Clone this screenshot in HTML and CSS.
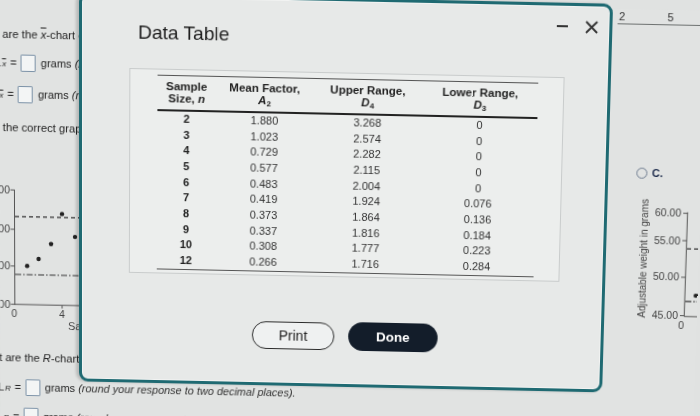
FILE: index.html
```html
<!DOCTYPE html>
<html lang="en">
<head>
<meta charset="utf-8">
<title>Data Table</title>
<link rel="stylesheet" href="styles.css">
</head>
<body>
<div class="photo">
  <div class="page">
    <div class="question">
      <p class="q q1">What are the <span class="xbar">x</span>-chart control limits?</p>
      <div class="ans ans-1"><span class="lbl">UCL<sub class="sub"><span class="xbar">x</span></sub></span><span>=</span><span class="box"></span><span class="unit">grams <span class="hint">(round your response to two decimal places).</span></span></div>
      <div class="ans ans-2"><span class="lbl">LCL<sub class="sub"><span class="xbar">x</span></sub></span><span>=</span><span class="box"></span><span class="unit">grams <span class="hint">(round your response to two decimal places).</span></span></div>
      <p class="q q2">Choose the correct graph below.</p>
      <svg class="chart-l" width="100" height="157" viewBox="0 0 100 157">
        <g font-family="Liberation Sans, Arial, sans-serif" font-size="10.5" fill="#444" text-anchor="end">
          <text x="10" y="15.1">60.00</text>
          <text x="10" y="54.4">55.00</text>
          <text x="10" y="91.3">50.00</text>
          <text x="10" y="129.9">45.00</text>
        </g>
        <g stroke="#555" stroke-width="1" fill="none">
          <line x1="14.5" y1="11" x2="14.5" y2="126.7"/>
          <line x1="10.5" y1="11.4" x2="14.5" y2="11.4"/>
          <line x1="10.5" y1="50.7" x2="14.5" y2="50.7"/>
          <line x1="10.5" y1="87.6" x2="14.5" y2="87.6"/>
          <line x1="10.5" y1="126.2" x2="14.5" y2="126.2"/>
          <line x1="14.5" y1="126.2" x2="100" y2="126.2"/>
          <line x1="62" y1="126.2" x2="62" y2="129.5"/>
        </g>
        <line x1="15" y1="37.8" x2="100" y2="37.8" stroke="#333" stroke-width="1.2" stroke-dasharray="4 3"/>
        <line x1="15" y1="96" x2="100" y2="96" stroke="#333" stroke-width="1.2" stroke-dasharray="6 2 1.5 2"/>
        <g fill="#222">
          <circle cx="27" cy="87.3" r="2.2"/>
          <circle cx="38.5" cy="80" r="2.2"/>
          <circle cx="51" cy="64.7" r="2.2"/>
          <circle cx="62" cy="34.4" r="2.2"/>
          <circle cx="75" cy="57.1" r="2.2"/>
        </g>
        <g font-family="Liberation Sans, Arial, sans-serif" font-size="10.5" fill="#444">
          <text x="13.8" y="139.2" text-anchor="middle">0</text>
          <text x="62" y="138.7" text-anchor="middle">4</text>
          <text x="67.9" y="151.5" font-size="11">Sample</text>
        </g>
      </svg>
      <p class="q q3">What are the <i>R</i>-chart control limits?</p>
      <div class="ans ans-3"><span class="lbl">UCL<sub class="sub"><i>R</i></sub></span><span>=</span><span class="box"></span><span class="unit">grams <span class="hint">(round your response to two decimal places).</span></span></div>
      <div class="ans ans-4"><span class="lbl">LCL<sub class="sub"><i>R</i></sub></span><span>=</span><span class="box"></span><span class="unit">grams <span class="hint">(round your response to two decimal places).</span></span></div>
    </div>

    <div class="side">
      <div class="mini-table"><span class="mt-a">2</span><span class="mt-b">5</span></div>
      <div class="option"><span class="radio"></span><span class="opt-letter">C.</span></div>
      <div class="chart-row">
        <div class="axis-title">Adjustable weight in grams</div>
        <svg class="chart-r" width="50" height="135" viewBox="0 0 50 135">
          <g font-family="Liberation Sans, Arial, sans-serif" font-size="10.5" fill="#444" text-anchor="end">
            <text x="31" y="14.3">60.00</text>
            <text x="31" y="41.7">55.00</text>
            <text x="31" y="78.5">50.00</text>
            <text x="31" y="117.2">45.00</text>
          </g>
          <g stroke="#555" stroke-width="1" fill="none">
            <line x1="37.3" y1="9.5" x2="37.3" y2="114.3"/>
            <line x1="33" y1="10.6" x2="37.3" y2="10.6"/>
            <line x1="33" y1="38" x2="37.3" y2="38"/>
            <line x1="33" y1="74.8" x2="37.3" y2="74.8"/>
            <line x1="33" y1="113.5" x2="37.3" y2="113.5"/>
            <line x1="37.3" y1="114.3" x2="50" y2="114.3"/>
          </g>
          <line x1="38" y1="46.1" x2="50" y2="46.1" stroke="#333" stroke-width="1.2" stroke-dasharray="4 3"/>
          <line x1="38" y1="99.2" x2="50" y2="99.2" stroke="#333" stroke-width="1.2" stroke-dasharray="6 2 1.5 2"/>
          <circle cx="48.2" cy="93.1" r="2.2" fill="#222"/>
          <text x="34.4" y="126.7" text-anchor="middle" font-family="Liberation Sans, Arial, sans-serif" font-size="10.5" fill="#444">0</text>
        </svg>
      </div>
    </div>
  </div>

  <div class="modal">
    <div class="modal-head">
      <h1 class="title">Data Table</h1>
      <div class="controls">
        <span class="minimize"></span>
        <svg class="close" width="13" height="13" viewBox="0 0 13 13">
          <path d="M1 1 L12 12 M12 1 L1 12" stroke="#333" stroke-width="1.8" fill="none"/>
        </svg>
      </div>
    </div>

    <div class="panel">
      <table class="data">
        <thead>
          <tr>
            <th class="c1">Sample<br>Size, <i>n</i></th>
            <th class="c2">Mean Factor,<br><i>A</i><sub class="hsub">2</sub></th>
            <th class="c3">Upper Range,<br><i>D</i><sub class="hsub">4</sub></th>
            <th class="c4">Lower Range,<br><i>D</i><sub class="hsub">3</sub></th>
          </tr>
        </thead>
        <tbody>
          <tr><td class="n">2</td><td>1.880</td><td>3.268</td><td>0</td></tr>
          <tr><td class="n">3</td><td>1.023</td><td>2.574</td><td>0</td></tr>
          <tr><td class="n">4</td><td>0.729</td><td>2.282</td><td>0</td></tr>
          <tr><td class="n">5</td><td>0.577</td><td>2.115</td><td>0</td></tr>
          <tr><td class="n">6</td><td>0.483</td><td>2.004</td><td>0</td></tr>
          <tr><td class="n">7</td><td>0.419</td><td>1.924</td><td>0.076</td></tr>
          <tr><td class="n">8</td><td>0.373</td><td>1.864</td><td>0.136</td></tr>
          <tr><td class="n">9</td><td>0.337</td><td>1.816</td><td>0.184</td></tr>
          <tr><td class="n">10</td><td>0.308</td><td>1.777</td><td>0.223</td></tr>
          <tr><td class="n">12</td><td>0.266</td><td>1.716</td><td>0.284</td></tr>
        </tbody>
      </table>
    </div>

    <div class="actions">
      <button class="btn btn-print" type="button">Print</button>
      <button class="btn btn-done" type="button">Done</button>
    </div>
  </div>
</div>
</body>
</html>
```

FILE: styles.css
```css
* {
  box-sizing: border-box;
}

html,
body {
  margin: 0;
  padding: 0;
}

body {
  width: 700px;
  height: 416px;
  overflow: hidden;
  background: #e0e2e1;
  font-family: "Liberation Sans", Arial, sans-serif;
  color: #222;
}

/* the screen is photographed at a slight angle: keystone + shear */
.photo {
  position: relative;
  width: 700px;
  height: 416px;
  transform-origin: 80px 208px;
  transform: matrix3d(1, 0.021, 0, 0, 0, 1, 0, 0.0000535, 0, 0, 1, 0, 0, 0, 0, 1);
}

.page {
  display: flex;
  width: 700px;
  height: 430px;
  background: #e1e3e2;
}

/* ---------- left question column ---------- */
.question {
  flex: none;
  width: 612px;
  font-size: 11px;
  line-height: 14px;
  white-space: nowrap;
}

.q {
  margin: 0;
}

.q1 {
  margin: 30.3px 0 0 -26.2px;
  font-size: 11.2px;
}

.q2 {
  margin: 16.4px 0 0 -38.6px;
  font-size: 11.2px;
}

.q3 {
  margin: 16px 0 0 -24.6px;
  font-size: 11.2px;
}

.xbar {
  font-style: italic;
  text-decoration: overline;
}

.ans {
  display: flex;
  align-items: center;
  gap: 4px;
  height: 18px;
}

.ans-1 {
  margin: 12.2px 0 0 -20.4px;
}

.ans-2 {
  margin: 12.8px 0 0 -21.5px;
}

.ans-3 {
  margin: 14.3px 0 0 -18.7px;
}

.ans-4 {
  margin: 11.4px 0 0 -18.7px;
}

.lbl {
  display: inline-flex;
  align-items: baseline;
}

.sub {
  font-size: 8px;
  line-height: 0;
  vertical-align: -3px;
  margin-left: 1px;
}

.box {
  display: inline-block;
  width: 15px;
  height: 17px;
  border: 1px solid #7d93a8;
  border-radius: 1px;
  background: #f3f5f5;
}

.unit {
  margin-left: 1px;
}

.hint {
  font-style: italic;
  color: #333;
}

.chart-l {
  display: block;
  margin-top: 44.3px;
}

/* ---------- right column ---------- */
.side {
  flex: none;
  width: 88px;
  font-size: 11px;
  line-height: 13px;
}

.mini-table {
  display: flex;
  padding-top: 0.5px;
  border-bottom: 1px solid #6f7372;
  color: #333;
}

.mt-a {
  margin-left: 1.3px;
}

.mt-b {
  margin-left: 41.9px;
}

.option {
  display: flex;
  align-items: center;
  height: 14px;
  margin-top: 139.8px;
  padding-left: 22.6px;
}

.radio {
  width: 11px;
  height: 11px;
  border: 1.5px solid #6d7b8f;
  border-radius: 50%;
}

.opt-letter {
  margin-left: 5px;
  font-weight: bold;
  color: #1f2d4d;
}

.chart-row {
  display: flex;
  align-items: flex-start;
  margin-top: 16.8px;
  padding-left: 27px;
}

.axis-title {
  flex: none;
  width: 12px;
  height: 123.5px;
  writing-mode: vertical-rl;
  transform: rotate(180deg);
  font-size: 10px;
  line-height: 12px;
  text-align: center;
  color: #444;
  white-space: nowrap;
}

.chart-r {
  display: block;
  flex: none;
  margin: 4.9px 0 0 -1px;
}

/* ---------- modal ---------- */
.modal {
  position: absolute;
  left: 79px;
  top: -5.4px;
  width: 528.4px;
  height: 388px;
  display: flex;
  flex-direction: column;
  border: 3px solid #1f6a72;
  border-radius: 9px;
  background: #e7e9e8;
  box-shadow: -3px 0 3px rgba(0, 0, 0, 0.18), inset 0 0 0 1px rgba(255, 255, 255, 0.45);
}

.modal-head {
  display: flex;
  justify-content: space-between;
  align-items: flex-start;
  padding: 13.9px 11.4px 0 55.5px;
}

.title {
  margin: 10.2px 0 0;
  font-size: 19px;
  line-height: 22px;
  font-weight: normal;
  color: #1e1e1e;
}

.controls {
  display: flex;
  align-items: center;
  gap: 17px;
  height: 13px;
}

.minimize {
  display: block;
  width: 11.5px;
  height: 2.5px;
  background: #333;
}

.close {
  display: block;
}

.panel {
  margin: 24.8px 43.4px 0 47px;
  padding: 4.9px 25.3px 3.5px 26.5px;
  border: 1px solid #c9cccc;
  background: #eceeed;
}

.data {
  width: 378.2px;
  border-collapse: separate;
  border-spacing: 0;
  border-top: 1.5px solid #555;
  border-bottom: 1.5px solid #555;
  table-layout: fixed;
}

.data th {
  padding: 3.2px 0 4.6px;
  border-bottom: 2px solid #222;
  font-size: 11.5px;
  line-height: 12.4px;
  font-weight: bold;
  text-align: center;
  vertical-align: bottom;
  color: #222;
}

.data .c1 { width: 59px; }
.data .c2 { width: 96px; }
.data .c3 { width: 109px; }
.data .c4 { width: 114.2px; }

.hsub {
  font-size: 8px;
  line-height: 0;
  vertical-align: -2px;
}

.data td {
  padding: 0;
  font-size: 11px;
  line-height: 15.68px;
  text-align: center;
  color: #333;
}

.data td.n {
  font-weight: bold;
  color: #222;
}

.actions {
  display: flex;
  justify-content: center;
  align-items: center;
  gap: 14px;
  margin-top: 44.5px;
  padding-left: 6px;
}

.btn {
  margin: 0;
  padding: 0;
  font-family: "Liberation Sans", Arial, sans-serif;
  cursor: pointer;
}

.btn-print {
  width: 83.6px;
  height: 28px;
  border: 1.5px solid #2b2b2b;
  border-radius: 14px;
  background: #eff1f1;
  font-size: 14px;
  color: #222;
}

.btn-done {
  width: 89.6px;
  height: 29.5px;
  border: none;
  border-radius: 15px;
  background: #131d2a;
  font-size: 13.5px;
  font-weight: bold;
  color: #fff;
}
```
